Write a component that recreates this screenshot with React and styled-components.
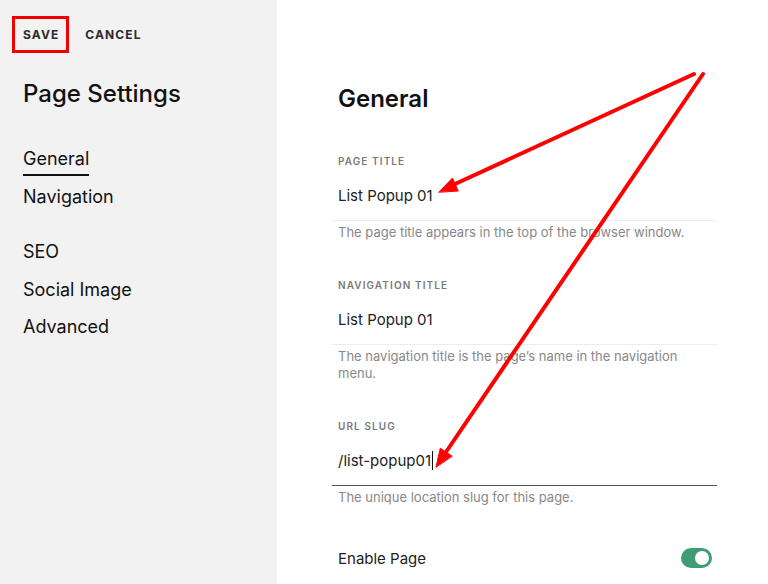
import styled, { createGlobalStyle } from "styled-components";

const Global = createGlobalStyle`
  html, body {
    margin: 0;
    padding: 0;
    height: 100%;
  }
  body {
    font-family: Inter, "Noto Sans", "Liberation Sans", sans-serif;
    color: #1a1a1a;
    background: #fff;
    -webkit-font-smoothing: antialiased;
  }
`;

const Page = styled.div`
  position: relative;
  display: flex;
  width: 768px;
  height: 584px;
  overflow: hidden;
`;

const Sidebar = styled.aside`
  width: 277px;
  flex-shrink: 0;
  background: #f2f2f2;
  display: flex;
  flex-direction: column;
`;

const TopBar = styled.div`
  display: flex;
  align-items: center;
  gap: 16px;
  padding: 16px 0 0 12px;
`;

const Action = styled.button`
  height: 37px;
  box-sizing: border-box;
  display: flex;
  align-items: center;
  padding: 0 7px 0 8px;
  border: 3px solid ${(p) => (p.$marked ? "#f20000" : "transparent")};
  background: none;
  font-family: inherit;
  font-size: 12px;
  font-weight: 700;
  letter-spacing: 1.1px;
  color: #2b2b2b;
  cursor: pointer;
  margin-left: ${(p) => (p.$marked ? "0" : "-11px")};
`;

const SideTitle = styled.h1`
  margin: 26px 0 0 23px;
  font-size: 24px;
  line-height: 30px;
  font-weight: 500;
  color: #111;
`;

const NavList = styled.nav`
  display: flex;
  flex-direction: column;
  margin: 39px 0 0 23px;
`;

const NavItem = styled.a`
  align-self: flex-start;
  font-size: 18px;
  line-height: 22px;
  color: #111;
  padding-bottom: 4px;
  border-bottom: 2px solid ${(p) => (p.$active ? "#111" : "transparent")};
  margin-bottom: ${(p) => p.$gap}px;
`;

const Main = styled.main`
  flex: 1;
  padding: 84px 0 0 55px;
`;

const Heading = styled.h2`
  margin: 0 0 40px 6px;
  font-size: 24px;
  line-height: 30px;
  font-weight: 600;
  color: #111;
`;

const Field = styled.div`
  width: 385px;
  margin-bottom: 37px;
`;

const Label = styled.div`
  padding: 0 6px;
  font-size: 10px;
  line-height: 14px;
  letter-spacing: 1.1px;
  font-weight: 600;
  color: #7a7a7a;
`;

const Input = styled.div`
  height: 53px;
  box-sizing: border-box;
  display: flex;
  align-items: center;
  padding: 2px 6px 0;
  font-size: 15px;
  color: #222;
  border-bottom: 1px solid ${(p) => (p.$focused ? "#555" : "#ececec")};
`;

const Caret = styled.span`
  display: inline-block;
  width: 1px;
  height: 19px;
  background: #111;
  margin-left: 1px;
`;

const Help = styled.div`
  margin-top: 3px;
  padding: 0 6px;
  font-size: 13px;
  line-height: 17px;
  color: #888;
`;

const ToggleRow = styled.div`
  width: 385px;
  height: 30px;
  box-sizing: border-box;
  display: flex;
  align-items: center;
  justify-content: space-between;
  padding: 0 5px 0 6px;
  font-size: 15px;
  color: #222;
`;

const Switch = styled.div`
  width: 31px;
  height: 20px;
  border-radius: 10px;
  background: #3f9c73;
  position: relative;
  &::after {
    content: "";
    position: absolute;
    right: 3px;
    top: 3px;
    width: 14px;
    height: 14px;
    border-radius: 50%;
    background: #fff;
  }
`;

const Overlay = styled.svg`
  position: absolute;
  left: 0;
  top: 0;
  pointer-events: none;
`;

const fields = [
  {
    label: "PAGE TITLE",
    value: "List Popup 01",
    help: "The page title appears in the top of the browser window.",
  },
  {
    label: "NAVIGATION TITLE",
    value: "List Popup 01",
    help: "The navigation title is the page\u2019s name in the navigation menu.",
  },
  {
    label: "URL SLUG",
    value: "/list-popup01",
    help: "The unique location slug for this page.",
    focused: true,
  },
];

const nav = [
  { name: "General", active: true, gap: 10 },
  { name: "Navigation", gap: 27 },
  { name: "SEO", gap: 10 },
  { name: "Social Image", gap: 9 },
  { name: "Advanced", gap: 0 },
];

export default function App() {
  return (
    <>
      <Global />
      <Page>
        <Sidebar>
          <TopBar>
            <Action $marked>SAVE</Action>
            <Action>CANCEL</Action>
          </TopBar>
          <SideTitle>Page Settings</SideTitle>
          <NavList>
            {nav.map((n) => (
              <NavItem key={n.name} $active={n.active} $gap={n.gap}>
                {n.name}
              </NavItem>
            ))}
          </NavList>
        </Sidebar>
        <Main>
          <Heading>General</Heading>
          {fields.map((f) => (
            <Field key={f.label}>
              <Label>{f.label}</Label>
              <Input $focused={f.focused}>
                {f.value}
                {f.focused && <Caret />}
              </Input>
              <Help>{f.help}</Help>
            </Field>
          ))}
          <ToggleRow>
            Enable Page
            <Switch />
          </ToggleRow>
        </Main>
        <Overlay width="768" height="584" viewBox="0 0 768 584">
          <g stroke="#ff0000" strokeWidth="4" strokeLinecap="round" fill="#ff0000">
            <line x1="694" y1="74" x2="455" y2="184" />
            <polygon points="439,192 452.4,178.1 458.2,190.7" strokeWidth="1" />
            <line x1="703" y1="74" x2="446" y2="452" />
            <polygon points="436,467 440.3,448.2 451.9,456" strokeWidth="1" />
          </g>
        </Overlay>
      </Page>
    </>
  );
}
